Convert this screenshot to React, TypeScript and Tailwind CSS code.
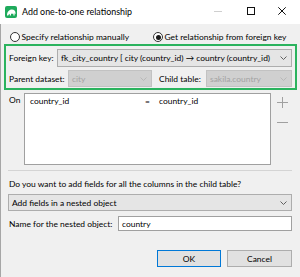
import React from "react";

function Chevron({ disabled }: { disabled?: boolean }) {
  return (
    <svg width="7" height="4" viewBox="0 0 7 4" className="shrink-0">
      <path d="M0.5 0.5 L3.5 3.5 L6.5 0.5" fill="none" stroke={disabled ? "#b8b8b8" : "#606060"} strokeWidth="1" />
    </svg>
  );
}

function Logo() {
  return (
    <svg width="12" height="12" viewBox="0 0 12 12" className="shrink-0">
      <rect x="0" y="0" width="12" height="12" rx="2" fill="#1faa5c" />
      <path
        d="M2 9.5 C2 6 4 3.5 7 3.5 C9.2 3.5 10.5 5 10.5 7 L10.5 8.3 L9.6 7.2 L9.6 9.5 L8.4 9.5 L8.4 7.8 L6 7.8 L6 9.5 L4.8 9.5 L4.8 8 C4 8.2 3.4 8.8 3.2 9.5 Z"
        fill="#ffffff"
      />
    </svg>
  );
}

export default function App() {
  return (
    <div className="w-[300px] h-[277px] bg-[#f0f0f0] text-[8.45px] leading-[12px] whitespace-nowrap text-[#000] font-['Lato','Open_Sans',sans-serif] overflow-hidden flex flex-col">
      {/* Title bar */}
      <div className="h-[24px] bg-white flex items-center shrink-0">
        <div className="ml-[5px] mt-[-1px]">
          <Logo />
        </div>
        <span className="ml-[5px] text-[8.9px] mt-[-1px]">Add one-to-one relationship</span>
        <div className="ml-auto flex items-center mr-[14px] mt-[-2px]">
          <div className="w-[8px] h-px bg-[#cfcfcf]" />
          <div className="ml-[25px] w-[8px] h-[8px] border border-[#111]" />
          <svg width="8" height="8" viewBox="0 0 8 8" className="ml-[23px]">
            <path d="M0.3 0.3 L7.7 7.7 M7.7 0.3 L0.3 7.7" stroke="#111" strokeWidth="1" />
          </svg>
        </div>
      </div>

      {/* Body */}
      <div className="flex-1 border-l border-[#a6a6a6] flex flex-col">
        {/* Radio row */}
        <div className="mt-[6px] h-[14px] flex items-center">
          <div className="ml-[9px] w-[143px] flex items-center">
            <div className="w-[10px] h-[10px] rounded-full border border-[#333] bg-white shrink-0" />
            <span className="ml-[1.5px]">Specify relationship manually</span>
          </div>
          <div className="flex items-center">
            <div className="w-[10px] h-[10px] rounded-full border border-[#333] bg-white flex items-center justify-center shrink-0">
              <div className="w-[5px] h-[5px] rounded-full bg-[#1a1a1a]" />
            </div>
            <span className="ml-[1.5px]">Get relationship from foreign key</span>
          </div>
        </div>

        {/* Green box */}
        <div className="ml-[3px] w-[293px] h-[46px] border-2 border-[#2bb35e] flex flex-col">
          <div className="mt-[3px] h-[18px] flex items-center">
            <span className="ml-[3px] w-[48px]">Foreign key:</span>
            <div className="w-[235px] h-[18px] bg-[#e5e5e5] border border-[#adadad] flex items-center pl-[3px] pr-[4px]">
              <span className="flex-1 overflow-hidden">
                fk_city_country [ city (country_id) → country (country_id)
              </span>
              <Chevron />
            </div>
          </div>
          <div className="mt-[3px] h-[17px] flex items-center">
            <span className="ml-[3px] w-[59px]">Parent dataset:</span>
            <div className="w-[84px] h-[17px] bg-[#d0d0d0] border border-[#c2c2c2] flex items-center pl-[3px] pr-[4px] text-[#a3a3a3]">
              <span className="flex-1">city</span>
              <Chevron disabled />
            </div>
            <span className="ml-[7px] w-[47px]">Child table:</span>
            <div className="w-[86px] h-[17px] bg-[#d0d0d0] border border-[#c2c2c2] flex items-center pl-[3px] pr-[4px] text-[#a3a3a3]">
              <span className="flex-1">sakila.country</span>
              <Chevron disabled />
            </div>
          </div>
        </div>

        {/* On section */}
        <div className="mt-[3px] flex">
          <span className="ml-[8px] w-[15px] mt-[1px]">On</span>
          <div className="w-[247px] h-[72px] bg-white border border-[#a0a0a0]">
            <div className="flex mt-[1px]">
              <span className="ml-[5px] w-[115px]">country_id</span>
              <span className="w-[14px]">=</span>
              <span>country_id</span>
            </div>
          </div>
          <div className="ml-[6px] flex flex-col">
            <svg width="11" height="11" viewBox="0 0 11 11" className="mt-[4px]">
              <path d="M5.5 0 L5.5 11 M0 5.5 L11 5.5" stroke="#a0a0a0" strokeWidth="1" />
            </svg>
            <svg width="11" height="1" viewBox="0 0 11 1" className="mt-[14px]">
              <path d="M0 0.5 L11 0.5" stroke="#a0a0a0" strokeWidth="1" />
            </svg>
          </div>
        </div>

        {/* Separator */}
        <div className="mt-[5px] ml-[7px] w-[284px] h-px bg-[#d4d4d4]" />

        {/* Question */}
        <div className="mt-[7px] ml-[8px]">Do you want to add fields for all the columns in the child table?</div>

        <div className="mt-[4px] ml-[7px] w-[284px] h-[17px] bg-[#e5e5e5] border border-[#adadad] flex items-center pl-[3px] pr-[4px]">
          <span className="flex-1">Add fields in a nested object</span>
          <Chevron />
        </div>

        <div className="mt-[5px] h-[15px] flex items-center">
          <span className="ml-[8px] w-[109px]">Name for the nested object:</span>
          <div className="w-[174px] h-[15px] bg-white border border-[#a0a0a0] flex items-center pl-[3px]">
            country
          </div>
        </div>

        <div className="mt-[19px] flex">
          <div className="ml-[156px] w-[64px] h-[17px] bg-[#e1e1e1] border border-[#0078d7] flex items-center justify-center">
            OK
          </div>
          <div className="ml-[6px] w-[65px] h-[17px] bg-[#e1e1e1] border border-[#adadad] flex items-center justify-center">
            Cancel
          </div>
        </div>
      </div>
    </div>
  );
}
